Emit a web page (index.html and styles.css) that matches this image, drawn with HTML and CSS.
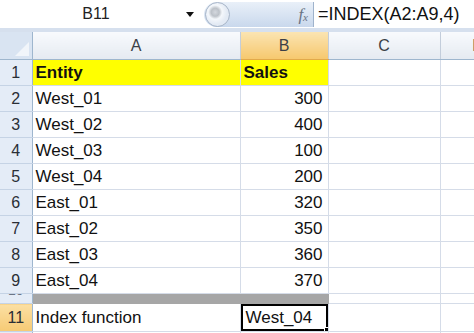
FILE: index.html
```html
<!DOCTYPE html>
<html>
<head>
  <title>INDEX function</title>
  <link rel="stylesheet" href="styles.css">
</head>
<body>
  <div class="window">
    <div class="formula-bar">
      <div class="name-box">
        <span class="name">B11</span>
        <span class="drop-arrow"></span>
      </div>
      <div class="fx-area">
        <span class="knob"></span>
        <span class="fx">f<sub>x</sub></span>
      </div>
      <div class="formula">=INDEX(A2:A9,4)</div>
    </div>
    <table class="sheet">
      <colgroup>
        <col class="c-head">
        <col class="c-a">
        <col class="c-b">
        <col class="c-c">
        <col class="c-d">
      </colgroup>
      <tr class="col-heads">
        <th class="corner"><span class="corner-tri"></span></th>
        <th>A</th>
        <th class="active">B</th>
        <th>C</th>
        <th>D</th>
      </tr>
      <tr>
        <th class="row-head">1</th>
        <td class="yellow bold">Entity</td>
        <td class="yellow bold">Sales</td>
        <td></td><td></td>
      </tr>
      <tr><th class="row-head">2</th><td>West_01</td><td class="num">300</td><td></td><td></td></tr>
      <tr><th class="row-head">3</th><td>West_02</td><td class="num">400</td><td></td><td></td></tr>
      <tr><th class="row-head">4</th><td>West_03</td><td class="num">100</td><td></td><td></td></tr>
      <tr><th class="row-head">5</th><td>West_04</td><td class="num">200</td><td></td><td></td></tr>
      <tr><th class="row-head">6</th><td>East_01</td><td class="num">320</td><td></td><td></td></tr>
      <tr><th class="row-head">7</th><td>East_02</td><td class="num">350</td><td></td><td></td></tr>
      <tr><th class="row-head">8</th><td>East_03</td><td class="num">360</td><td></td><td></td></tr>
      <tr><th class="row-head">9</th><td>East_04</td><td class="num">370</td><td></td><td></td></tr>
      <tr class="short-row">
        <th class="row-head"><div class="clip"><span>10</span></div></th>
        <td class="gray"></td><td class="gray"></td><td></td><td></td>
      </tr>
      <tr>
        <th class="row-head active">11</th>
        <td>Index function</td>
        <td class="selected"><div class="sel-box">West_04<span class="fill-handle"></span></div></td>
        <td></td><td></td>
      </tr>
      <tr><th class="row-head">12</th><td></td><td></td><td></td><td></td></tr>
    </table>
  </div>
</body>
</html>
```

FILE: styles.css
```css
body {
  margin: 0;
  background: #ffffff;
}
.window {
  width: 474px;
  height: 333px;
  overflow: hidden;
  font-family: "Liberation Sans", Arial, sans-serif;
}
/* formula bar */
.formula-bar {
  display: flex;
  height: 28px;
  border-bottom: 4px solid #d6e0ee;
  background: #ffffff;
}
.name-box {
  display: flex;
  align-items: center;
  width: 204px;
  flex: none;
}
.name {
  flex: 1;
  text-align: center;
  font-size: 16px;
  color: #222;
  padding-left: 6px;
}
.drop-arrow {
  width: 0;
  height: 0;
  border-left: 4px solid transparent;
  border-right: 4px solid transparent;
  border-top: 5px solid #111;
  margin-right: 10px;
}
.fx-area {
  display: flex;
  align-items: center;
  justify-content: space-between;
  width: 109px;
  flex: none;
  margin-top: 2px;
  height: 25px;
  border-radius: 13px 0 0 13px;
  background: linear-gradient(#e9f0f9, #c9d8ec);
  border-right: 1px solid #9fb3cc;
}
.knob {
  width: 23px;
  height: 23px;
  margin-left: 1px;
  border-radius: 50%;
  border: 1px solid #a7b5c8;
  background: radial-gradient(circle at 40% 40%, #d4d8de 0, #bcc1c8 4px, #f4f7fb 7px, #e3eaf4 12px);
}
.fx {
  font-family: "Liberation Serif", serif;
  font-style: italic;
  font-size: 17px;
  color: #6a7384;
  margin-right: 5px;
}
.fx sub {
  font-size: 11px;
  vertical-align: -1px;
}
.formula {
  flex: 1;
  font-size: 18px;
  line-height: 28px;
  padding-left: 4px;
  color: #111;
  white-space: nowrap;
}
/* grid */
.sheet {
  table-layout: fixed;
  border-collapse: collapse;
  width: 516px;
  font-size: 17px;
  color: #111;
}
.c-head { width: 32px; }
.c-a { width: 208px; }
.c-b { width: 88px; }
.c-c { width: 112px; }
.c-d { width: 76px; }
.col-heads th {
  height: 27px;
  padding: 0;
  font-weight: normal;
  font-size: 16px;
  color: #3b3f47;
  background: linear-gradient(#f8fafd, #e5eaf1);
  border-right: 1px solid #c3cddb;
  border-bottom: 1px solid #9eb6ce;
}
.col-heads th.active {
  background: linear-gradient(#fbe4b2, #f6c86e);
  border-bottom-color: #e2a94a;
}
.col-heads th.corner {
  position: relative;
  background: #d9e4f2;
  border-right: 1px solid #9eb6ce;
}
.corner-tri {
  position: absolute;
  right: 3px;
  bottom: 3px;
  width: 0;
  height: 0;
  border-left: 14px solid transparent;
  border-bottom: 14px solid #f1f5fa;
}
.row-head {
  height: 25px;
  padding: 0;
  font-weight: normal;
  font-size: 16px;
  color: #2a2e35;
  background: #e4ecf7;
  border-right: 1px solid #9eb6ce;
  border-bottom: 1px solid #c5d3e5;
}
.row-head.active {
  background: linear-gradient(#fbdfa3, #f6ca74);
}
td {
  height: 25px;
  padding: 0 3px;
  border: 1px solid #d5dce8;
  white-space: nowrap;
  overflow: hidden;
}
td.num {
  text-align: right;
  padding-right: 5px;
}
td.yellow {
  background: #ffff00;
}
td.bold {
  font-weight: bold;
}
.short-row th,
.short-row td {
  height: 9px;
  line-height: 9px;
}
.short-row td.gray {
  background: #a6a6a6;
  border-color: #a6a6a6;
}
.clip {
  height: 9px;
  overflow: hidden;
}
.clip span {
  display: block;
  font-size: 14px;
  line-height: 20px;
  margin-top: -14px;
  color: #6b7585;
}
td.selected {
  padding: 0;
}
.sel-box {
  position: relative;
  height: 23px;
  line-height: 23px;
  padding-left: 3px;
  border: 2px solid #000;
}
.fill-handle {
  position: absolute;
  right: -5px;
  bottom: -5px;
  width: 5px;
  height: 5px;
  background: #000;
  border: 1px solid #fff;
}
```
